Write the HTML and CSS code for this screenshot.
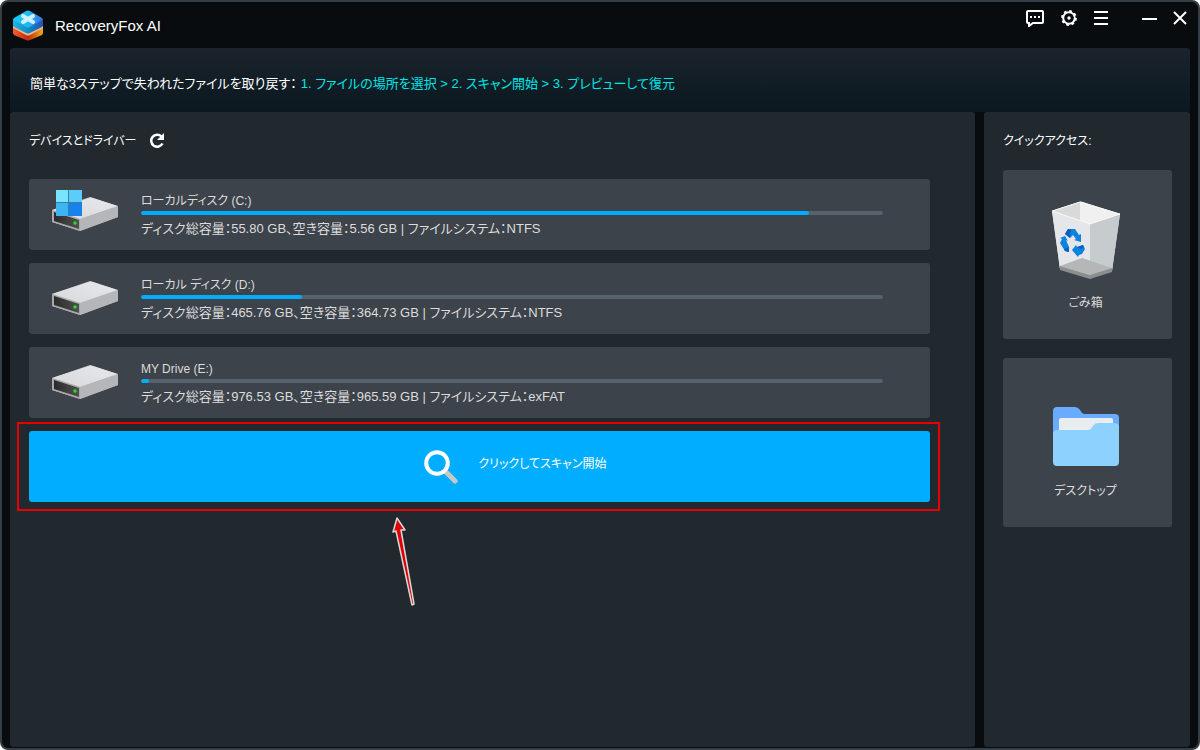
FILE: index.html
```html
<!DOCTYPE html>
<html lang="ja">
<head>
    <meta charset="UTF-8">
    <meta name="viewport" content="width=device-width, initial-scale=1.0">
    <title>RecoveryFox AI</title>
    <link rel="stylesheet" href="styles.css">
</head>
<body>

    <!-- Shared drive drawing -->
    <svg class="defs" width="0" height="0" aria-hidden="true">
        <defs>
            <linearGradient id="driveTop" x1="0" y1="1" x2="1" y2="0">
                <stop offset="0" stop-color="#d8d9dc"/>
                <stop offset="1" stop-color="#e8e8eb"/>
            </linearGradient>
            <linearGradient id="driveFront" x1="0" y1="0" x2="1" y2="0">
                <stop offset="0" stop-color="#2b2b2b"/>
                <stop offset="1" stop-color="#505050"/>
            </linearGradient>
            <symbol id="drive" viewBox="0 0 66 34">
                <path d="M0 13 38 0 65 9 66 20 28 34 0 25z" fill="#b9babd"/>
                <path d="M0 13 37 1Q39 0 41 1L66 9 28 22z" fill="url(#driveTop)"/>
                <path d="M28 22 66 9V20L28 34z" fill="#b5b6b9"/>
                <path d="M0 13 28 22V34L0 25z" fill="#a9a9ab"/>
                <path d="M2 15 27 23V32L2 24z" fill="url(#driveFront)"/>
                <circle cx="23" cy="26" r="1.8" fill="#20e020"/>
            </symbol>
        </defs>
    </svg>

    <div class="window">
        <header class="titlebar">
            <svg class="logo" viewBox="0 0 30 31" aria-hidden="true">
                <defs>
                    <linearGradient id="logoTop" x1="0" y1="0" x2="1" y2="0">
                        <stop offset="0" stop-color="#10ccfa"/>
                        <stop offset=".5" stop-color="#20b8f8"/>
                        <stop offset="1" stop-color="#3f6ee0"/>
                    </linearGradient>
                    <linearGradient id="logoSide" x1="0" y1="0" x2="1" y2="0">
                        <stop offset="0" stop-color="#22b4e4"/>
                        <stop offset=".5" stop-color="#128cc0"/>
                        <stop offset="1" stop-color="#2450b8"/>
                    </linearGradient>
                    <linearGradient id="logoBase" x1="0" y1="0" x2="1" y2="0">
                        <stop offset="0" stop-color="#f85a30"/>
                        <stop offset=".5" stop-color="#c02c0c"/>
                        <stop offset="1" stop-color="#f0a820"/>
                    </linearGradient>
                </defs>
                <path d="M0 16H30V22Q30 24 29 25L17 30Q15 31 13 30L1 25Q0 24 0 22z" fill="url(#logoBase)"/>
                <path d="M0 16V18L13 25Q15 26 17 25L30 18V16z" fill="#f4b890"/>
                <path d="M0 9V15Q0 16 1 17L13 23Q15 24 17 23L29 17Q30 16 30 15V9z" fill="url(#logoSide)"/>
                <path d="M1 8 13 1Q15 0 17 1L29 8Q30 9 29 10L17 17Q15 18 13 17L1 10Q0 9 1 8z" fill="url(#logoTop)"/>
                <path d="M10 6 20 12M20 6 10 12" stroke="#cdf2ff" stroke-width="4" stroke-linecap="round"/>
            </svg>
            <h1 class="app-name">RecoveryFox AI</h1>
            <nav class="window-buttons">
                <button class="icon-button" type="button" aria-label="フィードバック">
                    <svg width="20" height="18" viewBox="0 0 20 18" fill="none" stroke="#fff" stroke-width="2">
                        <path d="M3 2H17Q18 2 18 3V13Q18 14 17 14H8L4 17V14H3Q2 14 2 13V3Q2 2 3 2z"/>
                        <path d="M5 8H7M9 8H11M13 8H15"/>
                    </svg>
                </button>
                <button class="icon-button" type="button" aria-label="設定">
                    <svg width="16" height="16" viewBox="0 0 16 16" fill="none" stroke="#fff">
                        <circle cx="8" cy="8" r="5.800" stroke-width="2"/>
                        <circle cx="8" cy="8" r="7" stroke-width="1.800" stroke-dasharray="2.750 2.750"/>
                        <circle cx="8" cy="8" r="1.700" fill="#fff" stroke="none"/>
                    </svg>
                </button>
                <button class="icon-button" type="button" aria-label="メニュー">
                    <svg width="16" height="16" viewBox="0 0 16 16" stroke="#fff" stroke-width="2">
                        <path d="M1 2H15M1 8H15M1 14H15"/>
                    </svg>
                </button>
                <button class="icon-button minimize" type="button" aria-label="最小化">
                    <svg width="16" height="16" viewBox="0 0 16 16" stroke="#fff" stroke-width="2">
                        <path d="M1 9H16"/>
                    </svg>
                </button>
                <button class="icon-button" type="button" aria-label="閉じる">
                    <svg width="14" height="14" viewBox="0 0 14 14" stroke="#fff" stroke-width="2">
                        <path d="M1 1 13 13M13 1 1 13"/>
                    </svg>
                </button>
            </nav>
        </header>

        <div class="steps">
            <p>簡単な3ステップで失われたファイルを取り戻す：<span class="step-list">1. ファイルの場所を選択 &gt; 2. スキャン開始 &gt; 3. プレビューして復元</span></p>
        </div>

        <div class="content">
            <main class="panel devices">
                <div class="panel-head">
                    <h2>デバイスとドライバー</h2>
                    <button class="icon-button" type="button" aria-label="更新">
                        <svg width="16" height="16" viewBox="0 0 16 16" fill="none" stroke="#fff" stroke-width="2.500">
                            <path d="M12.500 3.500A6 6 0 1 0 13.500 10.500"/>
                            <path d="M15 0V7H8z" fill="#fff" stroke="none"/>
                        </svg>
                    </button>
                </div>

                <div class="drive-list">
                    <button class="drive" type="button">
                        <svg class="drive-icon" viewBox="0 0 66 42" width="66" height="42" aria-hidden="true">
                            <use href="#drive" y="7" width="66" height="34"/>
                            <path d="M4 0H30V26H4z" fill="#35809f"/>
                            <path d="M4 0H16V12H4z" fill="#79e4fd"/>
                            <path d="M17 0H30V12H17z" fill="#5ccdf8"/>
                            <path d="M4 13H16V26H4z" fill="#3fb4f5"/>
                            <path d="M17 13H30V26H17z" fill="#1682ec"/>
                        </svg>
                        <span class="drive-info">
                            <span class="drive-name">ローカルディスク (C:)</span>
                            <progress class="usage" value="90" max="100" aria-label="使用量"></progress>
                            <span class="drive-detail">ディスク総容量：55.80 GB、空き容量：5.56 GB | ファイルシステム：NTFS</span>
                        </span>
                    </button>
                    <button class="drive" type="button">
                        <svg class="drive-icon" viewBox="0 0 66 42" width="66" height="42" aria-hidden="true">
                            <use href="#drive" y="7" width="66" height="34"/>
                        </svg>
                        <span class="drive-info">
                            <span class="drive-name">ローカル ディスク (D:)</span>
                            <progress class="usage" value="21.700" max="100" aria-label="使用量"></progress>
                            <span class="drive-detail">ディスク総容量：465.76 GB、空き容量：364.73 GB | ファイルシステム：NTFS</span>
                        </span>
                    </button>
                    <button class="drive" type="button">
                        <svg class="drive-icon" viewBox="0 0 66 42" width="66" height="42" aria-hidden="true">
                            <use href="#drive" y="7" width="66" height="34"/>
                        </svg>
                        <span class="drive-info">
                            <span class="drive-name">MY Drive (E:)</span>
                            <progress class="usage" value="1.100" max="100" aria-label="使用量"></progress>
                            <span class="drive-detail">ディスク総容量：976.53 GB、空き容量：965.59 GB | ファイルシステム：exFAT</span>
                        </span>
                    </button>

                    <div class="scan-wrap">
                        <button class="scan" type="button">
                            <svg width="34" height="34" viewBox="0 0 34 34" fill="none" aria-hidden="true">
                                <path d="M21 21 31 31" stroke="#c8c8c8" stroke-width="5" stroke-linecap="round"/>
                                <circle cx="13" cy="13" r="10.800" fill="#00adff" stroke="#fff" stroke-width="4"/>
                            </svg>
                            <span>クリックしてスキャン開始</span>
                        </button>
                        <!-- callout round the scan button -->
                        <div class="callout"></div>
                        <svg class="callout-arrow" width="26" height="92" viewBox="0 0 26 92" aria-hidden="true">
                            <path d="M7 1 15 13 11 13 24 87 22 88 6 14 3 15z" fill="#e00000" stroke="#d8d8d8" stroke-width="1.500" stroke-linejoin="round"/>
                        </svg>
                    </div>
                </div>
            </main>

            <aside class="panel quick">
                <h2>クイックアクセス:</h2>
                <button class="quick-card" type="button">
                    <svg width="68" height="78" viewBox="0 0 68 78" aria-hidden="true">
                        <path d="M0 10 27 1Q29 0 31 1L68 13 60 70 38 77 8 68z" fill="#dfe2e5"/>
                        <path d="M0 10 28 1 68 13 38 23z" fill="#f0f0f0"/>
                        <path d="M0 10 28 1V20z" fill="#d9d9da"/>
                        <path d="M0 10 38 23V77L8 68z" fill="#e4e6e9"/>
                        <path d="M38 23 68 13 60 70 38 77z" fill="#c6cbce"/>
                        <path d="M8 65 30 57 60 67 38 74z" fill="#b5b6b8"/>
                        <path d="M8 65 38 74 60 67V71L38 78 8 69z" fill="#8d8d8e"/>
                        <path d="M0 10 28 1 68 13 38 23z" fill="none" stroke="#f8f8f8"/>
                        <path d="M13 33 16 28H23L27 34 29 33V41L22 39 24 38 21 34 18 37z" fill="#0c83dc"/>
                        <path d="M8 37 13 35 16 40 14 39 17 46V51L13 50 8 42 10 38z" fill="#0c83dc"/>
                        <path d="M20 49 24 44 25 46 31 44 33 48 30 53 27 54 26 56z" fill="#0c83dc"/>
                        <path d="M13 33 16 28H19L18 37zM12 48 17 46V51L13 50zM25 46 31 44 32 46 29 48z" fill="#0862bd"/>
                    </svg>
                    <span>ごみ箱</span>
                </button>
                <button class="quick-card" type="button">
                    <svg width="66" height="60" viewBox="0 0 66 60" aria-hidden="true">
                        <path d="M4 0H22Q25 0 27 3L29 6Q30 7 32 7H62Q66 7 66 11V50H0V4Q0 0 4 0z" fill="#69acff"/>
                        <path d="M8 11H58Q60 11 60 13V40H6V13Q6 11 8 11z" fill="#e9edf0"/>
                        <path d="M4 23H35Q38 23 39 20L41 18Q42 16 45 16H61Q66 16 66 20V55Q66 59 62 59H4Q0 59 0 55V27Q0 23 4 23z" fill="#8dd1ff"/>
                    </svg>
                    <span>デスクトップ</span>
                </button>
            </aside>
        </div>
    </div>

</body>
</html>
```
FILE: styles.css
```css
* {
    box-sizing: border-box;
}
body {
    margin: 0;
    background-color: #fff;
    color: #fff;
    font-family: "Liberation Sans", "Noto Sans CJK JP", sans-serif;
    font-size: 12px;
    font-feature-settings: "palt";
}
h1, h2, p {
    margin: 0;
    font-weight: normal;
}
button {
    margin: 0;
    padding: 0;
    border: none;
    background: none;
    color: inherit;
    font: inherit;
    font-feature-settings: inherit;
    cursor: pointer;
}
svg {
    display: block;
    flex: none;
}
.defs {
    position: absolute;
}
.window {
    display: flex;
    flex-direction: column;
    min-height: 100vh;
    padding: 0 8px 1px;
    border: 2px solid #343e46;
    border-radius: 8px;
    background-color: #080c0e;
}

/* Title bar */
.titlebar {
    display: flex;
    align-items: center;
    height: 46px;
    padding: 0 3px;
}
.logo {
    width: 30px;
    height: 31px;
}
.app-name {
    margin-left: 12px;
    font-size: 15px;
}
.window-buttons {
    display: flex;
    align-items: center;
    align-self: flex-start;
    gap: 16px;
    height: 32px;
    margin-left: auto;
}
.minimize {
    margin-left: 16px;
}

.steps {
    display: flex;
    align-items: center;
    height: 64px;
    padding: 4px 20px 0;
    border-radius: 3px 3px 0 0;
    background: linear-gradient(#1b232c, #0a1820);
    font-size: 13px;
}
.step-list {
    margin-left: 4px;
    color: #00e5e5;
}

/* Panels */
.content {
    display: flex;
    flex: 1;
    gap: 9px;
}
.panel {
    border-radius: 3px;
    background-color: #21282e;
}
.panel h2 {
    font-size: 12px;
    line-height: 20px;
}
.devices {
    flex: 1;
    padding: 19px 45px 20px 19px;
}
.panel-head {
    display: flex;
    align-items: center;
    gap: 12px;
    height: 20px;
    margin-bottom: 28px;
}
.drive-list {
    display: flex;
    flex-direction: column;
    gap: 13px;
}
.drive {
    display: flex;
    align-items: center;
    gap: 23px;
    height: 71px;
    padding: 0 47px 0 23px;
    border-radius: 3px;
    background-color: #3c434a;
    color: #dcdcdc;
    text-align: left;
}
.drive:hover, .quick-card:hover {
    background-color: #454d55;
}
.drive-icon {
    margin-top: -8px;
}
.drive-info {
    display: flex;
    flex: 1;
    flex-direction: column;
    padding-top: 2px;
}
.drive-name {
    line-height: 20px;
}
.drive-detail {
    padding-top: 2px;
    font-size: 13px;
    line-height: 24px;
}
.usage {
    display: block;
    width: 100%;
    height: 4px;
    border: none;
    border-radius: 2px;
    background-color: #56626c;
    appearance: none;
    overflow: hidden;
}
.usage::-webkit-progress-bar {
    background-color: #56626c;
}
.usage::-webkit-progress-value {
    border-radius: 2px;
    background-color: #00adff;
}

/* Scan button */
.scan-wrap {
    position: relative;
}
.scan {
    display: flex;
    align-items: flex-start;
    justify-content: center;
    gap: 20px;
    width: 100%;
    height: 71px;
    padding: 19px 0 0 72px;
    border-radius: 3px;
    background-color: #00adff;
    line-height: 28px;
}
.callout {
    position: absolute;
    inset: -9px -10px -9px -12px;
    border: 2px solid #e60000;
    pointer-events: none;
}
.callout-arrow {
    position: absolute;
    top: 86px;
    left: 361px;
}

/* Quick access */
.quick {
    width: 206px;
    padding: 19px 18px 20px 19px;
}
.quick h2 {
    margin-bottom: 19px;
}
.quick-card {
    display: flex;
    flex-direction: column;
    align-items: center;
    justify-content: flex-end;
    gap: 14px;
    width: 100%;
    height: 169px;
    margin-bottom: 19px;
    padding: 0 4px 26px 0;
    border-radius: 3px;
    background-color: #3c434a;
    color: #dcdcdc;
    line-height: 20px;
}
```
